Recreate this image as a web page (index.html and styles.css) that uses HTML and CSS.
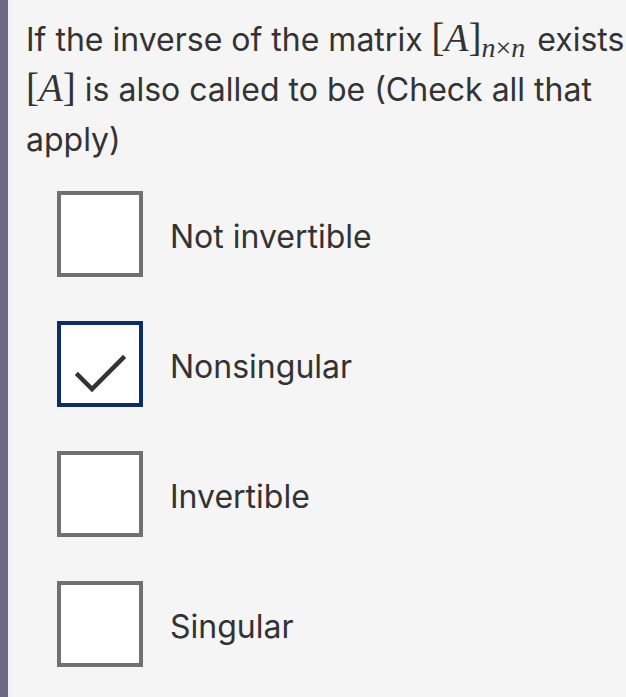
FILE: index.html
```html
<!DOCTYPE html>
<html lang="en">
<head>
<meta charset="utf-8">
<link rel="stylesheet" href="styles.css">
</head>
<body>
<div class="page">
  <div class="bar"></div>
  <div class="content">
    <p class="question">If the inverse of the matrix <span class="math">[<i>A</i>]<sub><i>n</i>×<i>n</i></sub></span> exists, <span class="math">[<i>A</i>]</span> is also called to be (Check all that apply)</p>
    <div class="options">
      <label class="option"><span class="box"></span><span class="label">Not invertible</span></label>
      <label class="option"><span class="box checked"><svg viewBox="0 0 78 78" width="78" height="78"><path d="M17 50 L31 64 L62 33" fill="none" stroke="#333" stroke-width="4.5" stroke-linecap="square"/></svg></span><span class="label">Nonsingular</span></label>
      <label class="option"><span class="box"></span><span class="label">Invertible</span></label>
      <label class="option"><span class="box"></span><span class="label">Singular</span></label>
    </div>
  </div>
</div>
</body>
</html>
```
FILE: styles.css
```css
html, body {
  margin: 0;
  padding: 0;
  background: #f5f5f5;
  overflow: hidden;
}
.page {
  display: flex;
  width: 626px;
  height: 697px;
  overflow: hidden;
}
.bar {
  width: 8px;
  flex: none;
  background: #6b6880;
  border-right: 4px solid #f0f0fa;
}
.content {
  padding-left: 14px;
  flex: none;
  width: 640px;
}
.question {
  margin: 15px 0 0 0;
  font-family: Inter, "Liberation Sans", sans-serif;
  font-size: 32px;
  line-height: 50px;
  color: #333;
}
.math {
  font-family: "Liberation Serif", "DejaVu Serif", serif;
  font-size: 39px;
  line-height: 0;
  color: #333;
}
.math sub {
  font-size: 28px;
  vertical-align: -6px;
  line-height: 0;
  margin-right: 3px;
}
.options {
  display: flex;
  flex-direction: column;
  gap: 44px;
  margin-top: 26px;
  padding-left: 31px;
}
.option {
  display: flex;
  align-items: center;
  gap: 27px;
  height: 86px;
}
.box {
  box-sizing: border-box;
  width: 86px;
  height: 86px;
  border: 4px solid #707070;
  background: #fff;
  flex: none;
}
.box.checked {
  border-color: #0b2e6b;
}
.box svg {
  display: block;
}
.label {
  font-family: Inter, "Liberation Sans", sans-serif;
  font-size: 32px;
  color: #333;
  padding-top: 5px;
}
```
